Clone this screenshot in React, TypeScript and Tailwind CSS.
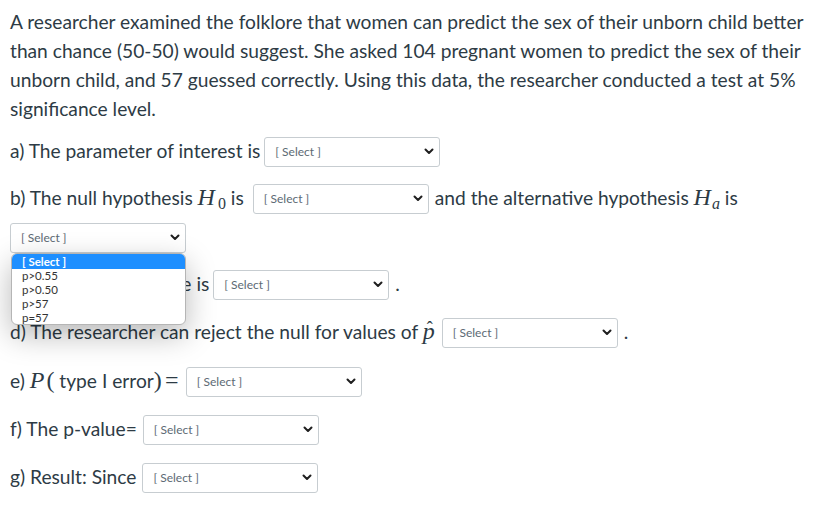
import React from "react";

const Chevron = () => (
  <svg width="10" height="7" viewBox="0 0 10 7" className="shrink-0">
    <path d="M1.5 1.5 L5 5 L8.5 1.5" fill="none" stroke="#1f1f1f" strokeWidth="2" strokeLinecap="round" strokeLinejoin="round" />
  </svg>
);

const Sel = ({ className = "" }: { className?: string }) => (
  <div
    className={`flex h-[30px] w-[176px] shrink-0 items-center justify-between rounded-[3px] border border-[#c7cdd1] bg-white pl-[10px] pr-[5px] ${className}`}
  >
    <span className="text-[12px] text-[#5d6a74] [font-family:Lato,sans-serif]">[ Select ]</span>
    <Chevron />
  </div>
);

const serif = "[font-family:'Liberation_Serif',serif]";

export default function App() {
  return (
    <div className="relative min-h-[510px] w-[840px] bg-white pl-[10px] pr-[14px] pt-[7px] text-[19.2px] text-[#2d3b45] [font-family:Lato,sans-serif]">
      <p className="leading-[29px]">
        A researcher examined the folklore that women can predict the sex of their unborn child better than chance
        (50-50) would suggest. She asked 104 pregnant women to predict the sex of their unborn child, and 57 guessed
        correctly. Using this data, the researcher conducted a test at 5% significance level.
      </p>

      <div className="mt-[9px] flex h-[39px] items-center">
        <span>a) The parameter of interest is</span>
        <Sel className="ml-[4px]" />
      </div>

      <div className="mt-[8px] flex h-[39px] items-center">
        <span className="flex items-baseline whitespace-pre">
          <span>b) The null hypothesis </span>
          <span className={`${serif} italic text-[24px] leading-none mr-[1px]`}>H</span>
          <span className={`${serif} ml-[2px] text-[16px] leading-none relative top-[4px]`}>0</span>
          <span> is</span>
        </span>
        <Sel className="ml-[9px]" />
        <span className="ml-[6px] flex items-baseline whitespace-pre">
          <span>and the alternative hypothesis </span>
          <span className={`${serif} italic text-[24px] leading-none`}>H</span>
          <span className={`${serif} italic ml-[1px] text-[16px] leading-none relative top-[4px]`}>a</span>
          <span> is</span>
        </span>
      </div>
      <div className="flex h-[39px] items-center">
        <Sel />
      </div>

      <div className="mt-[8px] flex h-[39px] items-center">
        <span className="ml-[5px] whitespace-nowrap">c) The critical z-score is</span>
        <Sel className="ml-[4px]" />
        <span className="ml-[6px]">.</span>
      </div>

      <div className="mt-[9px] flex h-[39px] items-center">
        <span className="flex items-baseline whitespace-pre">
          <span>d) The researcher can reject the null for values of </span>
          <span className={`${serif} italic text-[24px] leading-none relative inline-block`}>
            p
            <span className="absolute left-[4px] top-[0px] not-italic text-[18px] leading-none">ˆ</span>
          </span>
        </span>
        <Sel className="ml-[7px]" />
        <span className="ml-[6px]">.</span>
      </div>

      <div className="mt-[10px] flex h-[39px] items-center">
        <span className="flex items-baseline whitespace-pre">
          <span>e) </span>
          <span className={`${serif} italic text-[24px] leading-none mr-[2px]`}>P</span>
          <span className={`${serif} text-[24px] leading-none`}>(</span>
          <span> type I error</span>
          <span className={`${serif} text-[24px] leading-none`}>)</span>
          <span className={`${serif} text-[24px] leading-none inline-block w-[20px] text-center`}>=</span>
        </span>
        <Sel className="ml-[4px]" />
      </div>

      <div className="mt-[9px] flex h-[39px] items-center">
        <span>f) The p-value=</span>
        <Sel className="ml-[6px]" />
      </div>

      <div className="mt-[9px] flex h-[39px] items-center">
        <span>g) Result: Since</span>
        <Sel className="ml-[6px]" />
      </div>

      <div className="absolute left-[11px] top-[253px] h-[72px] w-[175px] overflow-hidden rounded-[6px] border border-[#b5b5b5] bg-white text-[11.5px] leading-[14px] text-[#333] shadow-[0_10px_30px_rgba(0,0,0,0.28)]">
        <div className="h-[15px] bg-[#1e8fff] pl-[10px] font-bold leading-[15px] text-white">[ Select ]</div>
        <div className="pl-[10px]">p&gt;0.55</div>
        <div className="pl-[10px]">p&gt;0.50</div>
        <div className="pl-[10px]">p&gt;57</div>
        <div className="pl-[10px]">p=57</div>
      </div>
    </div>
  );
}
